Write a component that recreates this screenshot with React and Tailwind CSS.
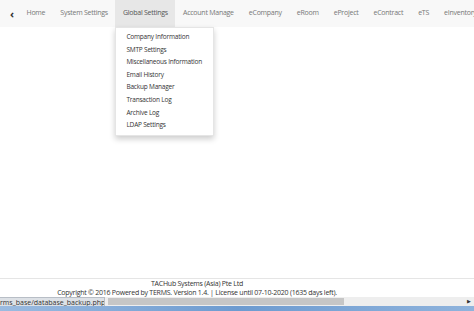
import { useState } from "react";

const navItems = [
  "Home",
  "System Settings",
  "Global Settings",
  "Account Manage",
  "eCompany",
  "eRoom",
  "eProject",
  "eContract",
  "eTS",
  "eInventory",
];

const menuItems = [
  "Company Information",
  "SMTP Settings",
  "Miscellaneous Information",
  "Email History",
  "Backup Manager",
  "Transaction Log",
  "Archive Log",
  "LDAP Settings",
];

export default function App() {
  const [active] = useState("Global Settings");

  return (
    <div
      className="h-screen w-full flex flex-col overflow-hidden bg-white text-[#555]"
      style={{ fontFamily: '"Open Sans", "DejaVu Sans", sans-serif' }}
    >
      {/* NAV */}
      <div className="relative h-[27px] shrink-0 bg-[#f8f8f8] flex items-stretch text-[7px] tracking-[-0.25px] whitespace-nowrap overflow-visible">
        <div className="w-[19px] shrink-0 flex items-center justify-center pl-[5px] text-[#333] text-[11px] font-bold leading-none">
          ‹
        </div>
        {navItems.map((item) => (
          <div
            key={item}
            className={
              item === active
                ? "relative shrink-0 flex items-center px-[7.5px] bg-[#e7e7e7] text-[#555]"
                : "relative shrink-0 flex items-center px-[7.5px] text-[#777]"
            }
          >
            {item}
            {item === active && (
              <div className="absolute left-0 top-[27px] z-10 w-[99px] bg-white py-[3px] shadow-[0_3px_6px_rgba(0,0,0,0.2)] border border-[#e5e5e5] tracking-[-0.2px]">
                {menuItems.map((m) => (
                  <div key={m} className="h-[12.6px] leading-[12.6px] pl-[10px] text-[#333] text-[6.5px]">
                    {m}
                  </div>
                ))}
              </div>
            )}
          </div>
        ))}
      </div>

      {/* CONTENT */}
      <div className="flex-1" />

      {/* FOOTER */}
      <div className="shrink-0 border-t border-[#e5e5e5]">
        <div className="w-[394px] text-center text-[7px] tracking-[-0.25px] leading-[8.5px] text-[#333] pt-[1px]">
          <div>TACHub Systems (Asia) Pte Ltd</div>
          <div>Copyright © 2016 Powered by TERMS. Version 1.4. | License until 07-10-2020 (1635 days left).</div>
        </div>
      </div>

      {/* STATUS BAR */}
      <div className="shrink-0 h-[9px] flex items-stretch text-[7px] leading-[9px]">
        <div className="w-[105px] bg-[#dde1e6] border-t border-r border-[#b8bec6] text-[#333] overflow-hidden whitespace-nowrap">
          rms_base/database_backup.php
        </div>
        <div className="flex-1 bg-[#eeeeee] flex items-stretch py-[1px] pl-[3px]">
          <div className="w-[236px] bg-[#c6c6c6]" />
          <div className="flex-1" />
          <div className="w-[10px] flex items-center justify-center text-[5px] text-[#333]">▶</div>
        </div>
      </div>
      <div className="shrink-0 h-[5px] bg-gradient-to-r from-[#9bbbe0] via-[#6d9bd0] to-[#8fb3dc]" />
    </div>
  );
}
